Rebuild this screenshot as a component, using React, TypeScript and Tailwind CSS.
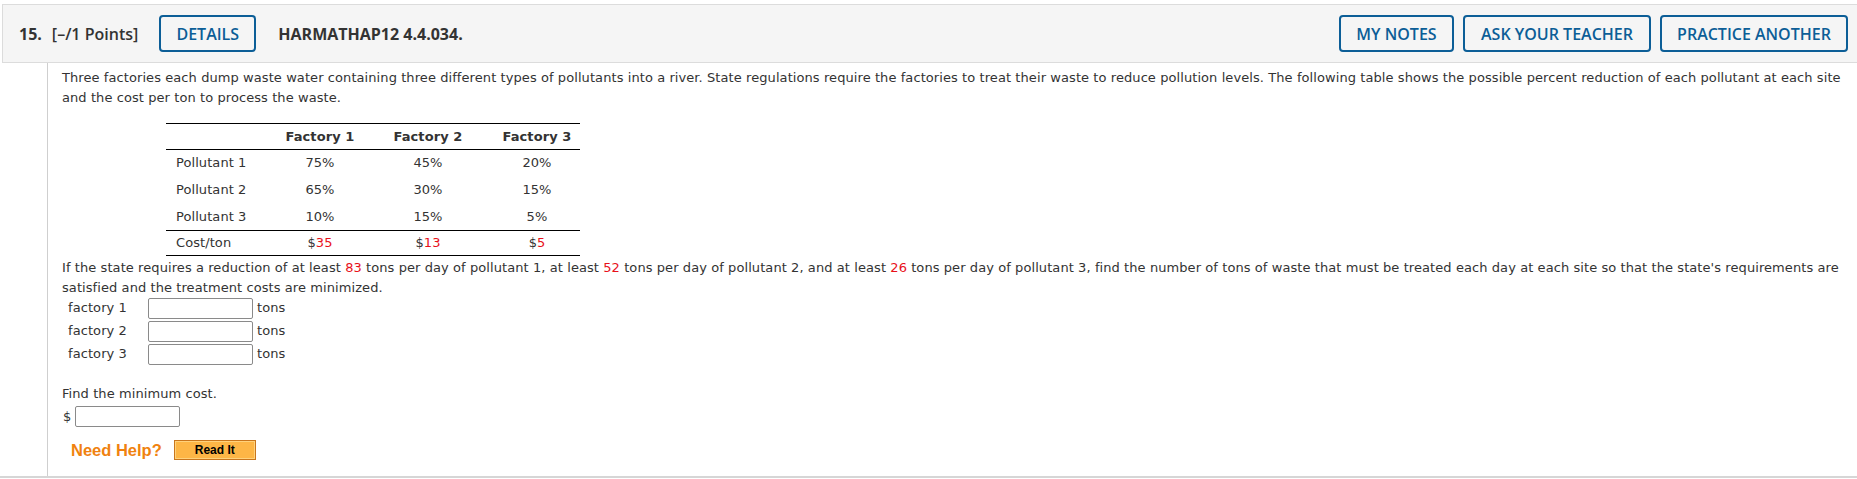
const Red = ({ children }: { children: React.ReactNode }) => (
  <span className="text-[#e8101a]">{children}</span>
);

const rows = [
  { name: "Pollutant 1", vals: ["75%", "45%", "20%"] },
  { name: "Pollutant 2", vals: ["65%", "30%", "15%"] },
  { name: "Pollutant 3", vals: ["10%", "15%", "5%"] },
];

const OutlineButton = ({ label, width }: { label: string; width: string }) => (
  <button
    className={`${width} h-[37px] rounded-[4px] border-2 border-[#0c5e97] text-[#0c5e97] font-semibold uppercase`}
  >
    {label}
  </button>
);

const Answer = ({ label }: { label: string }) => (
  <div className="h-[23px] flex items-start">
    <span className="w-[80px] leading-[20px]">{label}</span>
    <input className="w-[105px] h-[21px] border border-[#8a8a8a] rounded-[2px] bg-white" />
    <span className="ml-[4px] leading-[20px]">tons</span>
  </div>
);

export default function App() {
  return (
    <div className="w-[1857px] h-[479px] overflow-hidden bg-white pt-[4px] pl-[2px]">
      <header className="h-[59px] flex items-center bg-[#f5f5f5] border border-r-0 border-[#dcdcdc] pl-[16px] pr-[9px] font-['Open_Sans',sans-serif] text-[16px] font-semibold text-[#333]">
        <span className="font-bold">15.</span>
        <span className="ml-[10px]">[–/1 Points]</span>
        <div className="ml-[21px]">
          <OutlineButton label="Details" width="w-[97px]" />
        </div>
        <span className="ml-[22px] font-bold">HARMATHAP12 4.4.034.</span>
        <div className="ml-auto flex gap-[9px]">
          <OutlineButton label="My Notes" width="w-[115px]" />
          <OutlineButton label="Ask Your Teacher" width="w-[188px]" />
          <OutlineButton label="Practice Another" width="w-[188px]" />
        </div>
      </header>

      <div className="-ml-[2px] border-b-2 border-[#d6d6d6]">
        <div className="ml-[47px] border-l border-[#cfcfcf] pl-[14px] pt-[5px] pb-[15px] font-['DejaVu_Sans',Verdana,sans-serif] text-[13px] tracking-[0.08px] leading-[20px] text-[#333]">
          <p className="whitespace-nowrap">
            Three factories each dump waste water containing three different types of pollutants into a river. State regulations require the factories to treat their waste to reduce pollution levels. The following table shows the possible percent reduction of each pollutant at each site
            <br />
            and the cost per ton to process the waste.
          </p>

          <table className="mt-[15px] ml-[104px] border-collapse">
            <thead>
              <tr className="h-[26px] border-t border-b border-black">
                <th className="w-[100px]"></th>
                <th className="w-[108px] font-bold text-center">Factory 1</th>
                <th className="w-[108px] font-bold text-center">Factory 2</th>
                <th className="w-[98px] pl-[12px] font-bold text-center">Factory 3</th>
              </tr>
            </thead>
            <tbody>
              {rows.map((r) => (
                <tr key={r.name} className="h-[27px]">
                  <td className="pl-[10px]">{r.name}</td>
                  <td className="text-center">{r.vals[0]}</td>
                  <td className="text-center">{r.vals[1]}</td>
                  <td className="pl-[12px] text-center">{r.vals[2]}</td>
                </tr>
              ))}
              <tr className="h-[25px] border-t border-b border-black">
                <td className="pl-[10px]">Cost/ton</td>
                <td className="text-center">$<Red>35</Red></td>
                <td className="text-center">$<Red>13</Red></td>
                <td className="pl-[12px] text-center">$<Red>5</Red></td>
              </tr>
            </tbody>
          </table>

          <p className="mt-[2px] whitespace-nowrap">
            If the state requires a reduction of at least <Red>83</Red> tons per day of pollutant 1, at least <Red>52</Red> tons per day of pollutant 2, and at least <Red>26</Red> tons per day of pollutant 3, find the number of tons of waste that must be treated each day at each site so that the state's requirements are
            <br />
            satisfied and the treatment costs are minimized.
          </p>

          <div className="pl-[6px]">
            <Answer label="factory 1" />
            <Answer label="factory 2" />
            <Answer label="factory 3" />
          </div>

          <p className="mt-[17px]">Find the minimum cost.</p>
          <div className="mt-[2px] flex items-center h-[21px]">
            <span className="ml-[1px]">$</span>
            <input className="ml-[4px] w-[105px] h-[21px] border border-[#8a8a8a] rounded-[2px] bg-white" />
          </div>

          <div className="mt-[12px] ml-[9px] h-[22px] flex items-center">
            <span className="font-['Liberation_Sans',Arial,sans-serif] font-bold text-[16.5px] tracking-normal text-[#f0820f]">
              Need Help?
            </span>
            <button className="ml-[12px] w-[82px] h-[20px] border border-[#c9761c] bg-[#fdb646] shadow-[inset_0_0_0_1px_#ffd27c] font-['Liberation_Sans',Arial,sans-serif] font-bold text-[12px] tracking-normal leading-[18px] text-black">
              Read It
            </button>
          </div>
        </div>
      </div>
    </div>
  );
}
